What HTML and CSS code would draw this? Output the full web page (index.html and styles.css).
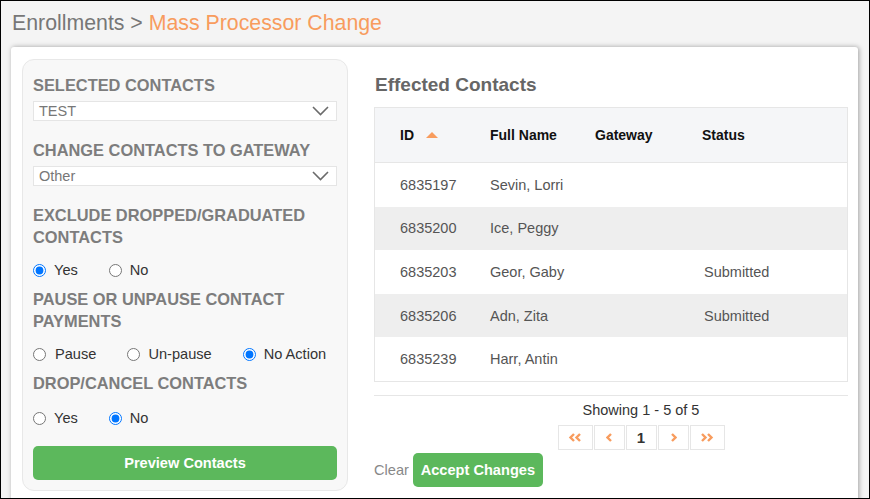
FILE: index.html
```html
<!DOCTYPE html>
<html lang="en-US">
<head>
    <meta charset="UTF-8">
    <title>Mass Processor Change</title>
    <link rel="stylesheet" href="styles.css">
</head>
<body>
    <header class="page-head">
        <h1><span class="crumb">Enrollments &gt;</span> <span class="crumb-current">Mass Processor Change</span></h1>
    </header>

    <main class="card">
        <section class="panel">
            <div class="field">
                <div class="label">Selected Contacts</div>
                <div class="select">
                    <span>TEST</span>
                    <svg class="caret" width="17" height="10" viewBox="0 0 17 10"><polyline points="1,1 8.5,8.5 16,1" /></svg>
                </div>
            </div>
            <div class="field">
                <div class="label">Change Contacts To Gateway</div>
                <div class="select">
                    <span>Other</span>
                    <svg class="caret" width="17" height="10" viewBox="0 0 17 10"><polyline points="1,1 8.5,8.5 16,1" /></svg>
                </div>
            </div>

            <div class="label">Exclude Dropped/Graduated Contacts</div>
            <div class="radios">
                <label><input type="radio" name="exclude" checked> Yes</label>
                <label><input type="radio" name="exclude"> No</label>
            </div>

            <div class="label">Pause or Unpause Contact Payments</div>
            <div class="radios">
                <label class="pause"><input type="radio" name="pause"> Pause</label>
                <label><input type="radio" name="pause"> Un-pause</label>
                <label><input type="radio" name="pause" checked> No Action</label>
            </div>

            <div class="label">Drop/Cancel Contacts</div>
            <div class="radios radios-last">
                <label><input type="radio" name="drop"> Yes</label>
                <label><input type="radio" name="drop" checked> No</label>
            </div>

            <button class="btn btn-block">Preview Contacts</button>
        </section>

        <section class="results">
            <h2>Effected Contacts</h2>
            <div class="grid">
                <div class="row row-head">
                    <div>ID <span class="sort"></span></div>
                    <div>Full Name</div>
                    <div>Gateway</div>
                    <div>Status</div>
                </div>
                <div class="row">
                    <div>6835197</div><div>Sevin, Lorri</div><div></div><div></div>
                </div>
                <div class="row">
                    <div>6835200</div><div>Ice, Peggy</div><div></div><div></div>
                </div>
                <div class="row">
                    <div>6835203</div><div>Geor, Gaby</div><div></div><div class="status">Submitted</div>
                </div>
                <div class="row">
                    <div>6835206</div><div>Adn, Zita</div><div></div><div class="status">Submitted</div>
                </div>
                <div class="row">
                    <div>6835239</div><div>Harr, Antin</div><div></div><div></div>
                </div>
            </div>

            <div class="pager-wrap">
                <div class="showing">Showing 1 - 5 of 5</div>
                <div class="pager">
                    <span class="page first"><svg width="14" height="9" viewBox="0 0 14 9"><polyline points="6,1 2.5,4.5 6,8" /><polyline points="12,1 8.5,4.5 12,8" /></svg></span>
                    <span class="page prev"><svg width="7" height="9" viewBox="0 0 7 9"><polyline points="5,1 1.5,4.5 5,8" /></svg></span>
                    <span class="page current">1</span>
                    <span class="page next"><svg width="7" height="9" viewBox="0 0 7 9"><polyline points="2,1 5.5,4.5 2,8" /></svg></span>
                    <span class="page last"><svg width="14" height="9" viewBox="0 0 14 9"><polyline points="2,1 5.5,4.5 2,8" /><polyline points="8,1 11.5,4.5 8,8" /></svg></span>
                </div>
            </div>

            <div class="actions">
                <a class="clear">Clear</a>
                <button class="btn">Accept Changes</button>
            </div>
        </section>
    </main>
</body>
</html>
```

FILE: styles.css
```css
:root {
    --page-bg: #f4f4f4;
    --muted: #777777;
    --label: #7d7d7d;
    --orange: #f89c5e;
    --green: #5cb85c;
    --line: #e6e6e6;
}

* {
    margin: 0;
    padding: 0;
    box-sizing: border-box;
}

html, body {
    height: 499px;
}

body {
    font-family: "Liberation Sans", Arial, sans-serif;
    background: var(--page-bg);
    border: 1px solid #000;
    overflow: hidden;
    color: #555;
}

.page-head {
    padding: 9px 11px 11px;
}

h1 {
    font-size: 21.3px;
    font-weight: 400;
    line-height: 26px;
}

.crumb {
    color: var(--muted);
}

.crumb-current {
    color: var(--orange);
}

.card {
    margin-left: 10px;
    width: 847px;
    height: 470px;
    background: #fff;
    border-radius: 3px;
    box-shadow: 1px 0 5px rgba(0, 0, 0, 0.35);
    padding: 12px 10px 0 11px;
    display: flex;
    gap: 26px;
}

/* left form panel */
.panel {
    width: 326px;
    height: 432px;
    flex-shrink: 0;
    background: #f8f8f8;
    border: 1px solid #e8e8e8;
    border-radius: 12px;
    padding: 14px 10px 0 10px;
}

.label {
    font-size: 16.4px;
    font-weight: 700;
    line-height: 22px;
    color: var(--label);
    text-transform: uppercase;
}

.field {
    margin-bottom: 18px;
}

.field .label {
    margin-bottom: 5px;
}

.select {
    height: 20px;
    background: #fff;
    border: 1px solid #e5e5e5;
    display: flex;
    align-items: center;
    justify-content: space-between;
    padding: 0 7px 0 5px;
    font-size: 14.5px;
    color: var(--muted);
}

.caret polyline {
    fill: none;
    stroke: #6b6b6b;
    stroke-width: 1.6;
}

.radios {
    display: flex;
    align-items: center;
    gap: 31px;
    height: 28px;
    margin: 8px 0 4px;
    font-size: 14.6px;
    color: #333;
}

.radios-last {
    margin-top: 10px;
}

.radios label {
    display: flex;
    align-items: center;
}

.radios input {
    width: 13px;
    height: 13px;
    margin: 0 8px 0 0;
}

.radios .pause input {
    margin-right: 9px;
}

.btn {
    font-family: inherit;
    background: var(--green);
    color: #fff;
    border: none;
    border-radius: 5px;
    font-weight: 700;
    font-size: 14.6px;
    height: 34px;
    padding: 0 8px;
    cursor: pointer;
}

.btn-block {
    display: block;
    width: 100%;
    margin-top: 14px;
}

/* right results column */
.results {
    width: 474px;
}

h2 {
    font-size: 19px;
    font-weight: 700;
    color: #666;
    line-height: 30px;
    padding-left: 1px;
    margin: 11px 0 7px;
}

.grid {
    border: 1px solid var(--line);
}

.row {
    display: grid;
    grid-template-columns: 90px 105px 107px 1fr;
    padding-left: 25px;
    align-items: center;
    height: 43.6px;
    font-size: 14.5px;
    color: #555;
}

.row:nth-child(odd) {
    background: #eeeeee;
}

.row-head,
.row-head:nth-child(odd) {
    height: 55px;
    background: #f5f6f8;
    border-bottom: 1px solid var(--line);
    font-size: 14px;
    font-weight: 700;
    color: #111;
}

.row .status {
    padding-left: 2px;
}

.sort {
    display: inline-block;
    width: 0;
    height: 0;
    margin-left: 8px;
    border-left: 6px solid transparent;
    border-right: 6px solid transparent;
    border-bottom: 6px solid var(--orange);
    vertical-align: 2px;
}

.pager-wrap {
    margin-top: 13px;
    border-top: 1px solid var(--line);
    padding: 4px 0 0 60px;
    display: flex;
    flex-direction: column;
    align-items: center;
}

.showing {
    font-size: 14.5px;
    line-height: 20px;
    color: #333;
}

.pager {
    display: flex;
    gap: 1px;
    margin-top: 5px;
}

.page {
    height: 25px;
    border: 1px solid var(--line);
    display: flex;
    align-items: center;
    justify-content: center;
    font-size: 15px;
    font-weight: 700;
    color: #333;
}

.page.first { width: 35px; }
.page.prev { width: 31px; }
.page.current { width: 31px; }
.page.next { width: 31px; }
.page.last { width: 35px; }

.page polyline {
    fill: none;
    stroke: var(--orange);
    stroke-width: 2.4;
}

.actions {
    display: flex;
    align-items: center;
    gap: 4px;
    margin-top: 3px;
}

.clear {
    font-size: 14.6px;
    color: #888;
}

.actions .btn {
    width: 130px;
    padding: 0;
}
```
